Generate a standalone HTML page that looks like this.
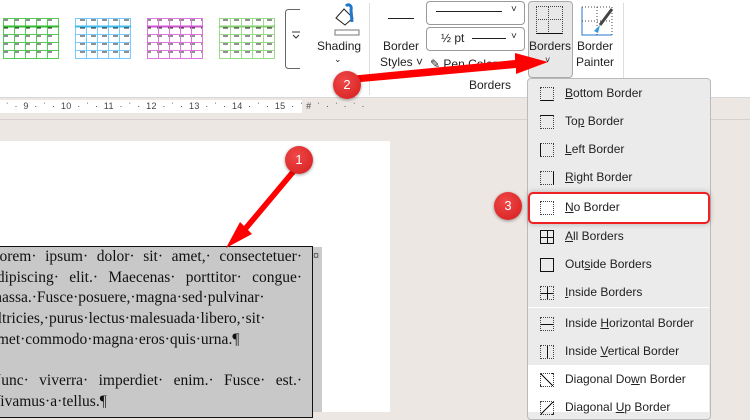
<!DOCTYPE html><html><head><style>
body{margin:0;width:750px;height:412px;overflow:hidden;background:#ede7e4;font-family:"Liberation Sans",sans-serif;position:relative}
.a{position:absolute}
.rib{left:0;top:0;width:750px;height:97px;background:#fff;border-bottom:1px solid #d8d8d8}
.t{font-size:12px;color:#222}
.menu{left:527px;top:78px;width:182px;height:340px;background:#ebebeb;border:1px solid #bbb;border-radius:4px}
.it{position:absolute;left:38px;font-size:12px;color:#222}
.ic{position:absolute;left:13px;width:12px;height:12px;border:1px dotted #444}
.doc{font-family:"Liberation Serif",serif;font-size:15.5px;line-height:20.7px;color:#111;text-align:justify}
.c{position:absolute;border-radius:50%;background:radial-gradient(circle at 40% 35%,#f04848,#d41c1c);color:#fff;font-size:13px;text-align:center;box-shadow:0 1px 3px rgba(0,0,0,.4)}
</style></head><body>
<div class="a rib"></div>
<svg class="a" style="left:0;top:0" width="300" height="70">
<defs><pattern id="g" width="11" height="8" patternUnits="userSpaceOnUse"><path d="M3 4h5" stroke="#222" stroke-width="1"/></pattern></defs>
<g fill="url(#g)"><rect x="3" y="18" width="56" height="40"/><rect x="75" y="18" width="56" height="40"/><rect x="147" y="18" width="56" height="40"/><rect x="219" y="18" width="56" height="40"/></g>
<g fill="none" stroke-width="1"><path d="M3.5 18.5h55v40h-55zM3.5 34.5h55M3.5 42.5h55M3.5 50.5h55M14.5 18v40M25.5 18v40M36.5 18v40M47.5 18v40" stroke="#5c5"/><path d="M3 26.5h56" stroke="#3b3" stroke-width="2"/>
<path d="M75.5 18.5h55v40h-55zM75.5 34.5h55M75.5 42.5h55M75.5 50.5h55M86.5 18v40M97.5 18v40M108.5 18v40M119.5 18v40" stroke="#7cf"/><path d="M75 26.5h56" stroke="#4be" stroke-width="2"/>
<path d="M147.5 18.5h55v40h-55zM147.5 34.5h55M147.5 42.5h55M147.5 50.5h55M158.5 18v40M169.5 18v40M180.5 18v40M191.5 18v40" stroke="#d7d"/><path d="M147 26.5h56" stroke="#c5c" stroke-width="2"/>
<path d="M219.5 18.5h55v40h-55zM219.5 34.5h55M219.5 42.5h55M219.5 50.5h55M230.5 18v40M241.5 18v40M252.5 18v40M263.5 18v40" stroke="#9d8"/><path d="M219 26.5h56" stroke="#8c7" stroke-width="2"/></g>
<rect x="285.5" y="9.5" width="22" height="59" rx="3" fill="#fff" stroke="#666"/><path d="M292 32h8M293 35l3 3 3-3" stroke="#333" fill="none"/>
</svg>
<svg class="a" style="left:320px;top:0" width="50" height="40"><path d="M15 30h24v5H15z" fill="none" stroke="#777"/><path d="M16 18l8-9 9 9-8 7z" fill="none" stroke="#222"/><path d="M26 6c3-3 6 0 5 4l1 12" stroke="#27c" stroke-width="3" fill="none"/></svg>
<div class="a t" style="left:317px;top:39px">Shading</div><div class="a t" style="left:334px;top:54px;font-size:9px">⌄</div>
<div class="a" style="left:369px;top:3px;width:1px;height:92px;background:#ddd"></div>
<div class="a" style="left:388px;top:18px;width:26px;height:1px;background:#222"></div>
<div class="a t" style="left:383px;top:39px">Border</div><div class="a t" style="left:380px;top:55px">Styles ˅</div>
<div class="a" style="left:426px;top:1px;width:97px;height:22px;border:1px solid #999;border-radius:4px;background:#fff"></div>
<div class="a" style="left:436px;top:11px;width:66px;height:1px;background:#222"></div><div class="a t" style="left:511px;top:4px;font-size:10px">˅</div>
<div class="a" style="left:426px;top:27px;width:97px;height:22px;border:1px solid #999;border-radius:4px;background:#fff"></div>
<div class="a t" style="left:441px;top:31px">½ pt</div><div class="a" style="left:472px;top:38px;width:34px;height:1px;background:#222"></div><div class="a t" style="left:511px;top:31px;font-size:10px">˅</div>
<div class="a t" style="left:430px;top:57px">✎ Pen Color</div>
<div class="a t" style="left:469px;top:78px">Borders</div>
<div class="a" style="left:528px;top:1px;width:43px;height:75px;background:#e8e8e8;border:1px solid #aaa;border-radius:4px"></div>
<div class="a" style="left:536px;top:6px;width:25px;height:26px;border:1px dotted #444;border-bottom:1px solid #111"></div>
<div class="a" style="left:548px;top:6px;width:0;height:26px;border-left:1px dotted #444"></div><div class="a" style="left:536px;top:19px;width:25px;border-top:1px dotted #444"></div>
<div class="a t" style="left:529px;top:39px">Borders</div><div class="a t" style="left:545px;top:55px;font-size:9px">˅</div>
<svg class="a" style="left:578px;top:3px" width="40" height="34"><path d="M4 4v28h30" stroke="#27c" fill="none"/><path d="M4 4h30v28M19 4v28M4 18h30" stroke="#444" stroke-dasharray="1 2" fill="none"/><path d="M34 6L22 22" stroke="#444" stroke-width="3"/><path d="M22 22l-6 6 4 2z" fill="#39d"/></svg>
<div class="a t" style="left:577px;top:39px">Border</div><div class="a t" style="left:576px;top:55px">Painter</div>
<div class="a" style="left:623px;top:3px;width:1px;height:92px;background:#ddd"></div>
<div class="a" style="left:0;top:100px;width:302px;height:13px;background:#fff"></div>
<div class="a" style="left:0;top:101px;font-size:9px;color:#444;white-space:pre;letter-spacing:.3px">  ˈ  ·  9  ·  ˈ  ·  10  ·  ˈ  ·  11  ·  ˈ  ·  12  ·  ˈ  ·  13  ·  ˈ  ·  14  ·  ˈ  ·  15  ·  ˈ #  ˈ  ·  ˈ  ·  ˈ  ·</div>
<div class="a" style="left:0;top:119px;width:750px;height:1px;background:#d6d0ce"></div>
<div class="a" style="left:0;top:141px;width:390px;height:271px;background:#fff"></div>
<div class="a" style="left:312px;top:247px;width:10px;height:165px;background:#ccc"></div>
<div class="a doc" style="left:-19px;top:246px;width:312px;height:170px;padding:0 10px 0 8px;background:#c8c8c8;border:1px solid #111;">Lorem· ipsum· dolor· sit· amet,· consectetuer· adipiscing· elit.· Maecenas· porttitor· congue· massa.·Fusce·posuere,·magna·sed·pulvinar· ultricies,·purus·lectus·malesuada·libero,·sit· amet·commodo·magna·eros·quis·urna.¶<br><br>Nunc· viverra· imperdiet· enim.· Fusce· est.· Vivamus·a·tellus.¶</div>
<div class="a" style="left:313px;top:250px;font-size:11px;color:#555">¤</div>
<div class="a menu"></div>
<div class="a" style="left:528px;top:365px;width:181px;height:47px;background:#fff"></div>
<div class="a" style="left:528px;top:307px;width:181px;height:1px;background:#fff"></div>
<div class="a" style="left:528px;top:192px;width:178px;height:28px;background:#fff;border:2px solid #e22;border-radius:5px;box-shadow:0 0 6px rgba(0,0,0,.25)"></div>
<div class="a" style="left:527px;top:78px;width:183px;height:334px">
<div class="ic" style="top:9px;border-bottom:1px solid #111"></div><div class="it" style="top:8px"><u>B</u>ottom Border</div>
<div class="ic" style="top:37px;border-top:1px solid #111"></div><div class="it" style="top:36px">To<u>p</u> Border</div>
<div class="ic" style="top:65px;border-left:1px solid #111"></div><div class="it" style="top:64px"><u>L</u>eft Border</div>
<div class="ic" style="top:93px;border-right:1px solid #111"></div><div class="it" style="top:92px"><u>R</u>ight Border</div>
<div class="ic" style="top:123px"></div><div class="it" style="top:122px"><u>N</u>o Border</div>
<div class="ic" style="top:152px;border:1px solid #111;background:linear-gradient(#111,#111) 6px 0/1px 12px no-repeat,linear-gradient(#111,#111) 0 6px/12px 1px no-repeat"></div><div class="it" style="top:151px"><u>A</u>ll Borders</div>
<div class="ic" style="top:180px;border:1px solid #111"></div><div class="it" style="top:179px">Out<u>s</u>ide Borders</div>
<div class="ic" style="top:208px;background:linear-gradient(#111,#111) 6px 0/1px 12px no-repeat,linear-gradient(#111,#111) 0 6px/12px 1px no-repeat"></div><div class="it" style="top:207px"><u>I</u>nside Borders</div>
<div class="ic" style="top:239px;background:linear-gradient(#111,#111) 0 6px/12px 1px no-repeat"></div><div class="it" style="top:238px">Inside <u>H</u>orizontal Border</div>
<div class="ic" style="top:267px;background:linear-gradient(#111,#111) 6px 0/1px 12px no-repeat"></div><div class="it" style="top:266px">Inside <u>V</u>ertical Border</div>
<div class="ic" style="top:295px;background:linear-gradient(45deg,transparent 46%,#111 47%,#111 53%,transparent 54%)"></div><div class="it" style="top:294px">Diagonal Do<u>w</u>n Border</div>
<div class="ic" style="top:323px;background:linear-gradient(-45deg,transparent 46%,#111 47%,#111 53%,transparent 54%)"></div><div class="it" style="top:322px">Diagonal <u>U</u>p Border</div>
</div>
<svg class="a" style="left:0;top:0" width="750" height="412"><g fill="#f00">
<path d="M296 164L244 226l-4-4-14 26 26-14-4-4 52-62z"/>
<path d="M350 83L516 68l0 6 32-12-33-9 0 7L349 76z"/></g></svg>
<div class="c" style="left:285px;top:146px;width:28px;height:28px;line-height:28px">1</div>
<div class="c" style="left:333px;top:71px;width:28px;height:28px;line-height:28px">2</div>
<div class="c" style="left:494px;top:192px;width:28px;height:28px;line-height:28px">3</div>
</body></html>
